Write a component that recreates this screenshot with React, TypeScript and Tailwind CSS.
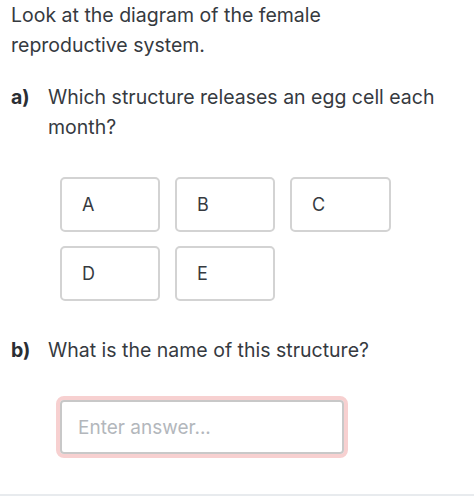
const options = ["A", "B", "C", "D", "E"];

const App = () => {
  return (
    <div
      className="w-[474px] h-[503px] bg-white text-[#363a3f] overflow-hidden flex flex-col"
      style={{ fontFamily: "Inter, 'Open Sans', sans-serif" }}
    >
      <div className="px-[11px] flex flex-col">
        <p className="text-[19.5px] leading-[30px]">
          Look at the diagram of the female
          <br />
          reproductive system.
        </p>

        <div className="flex mt-[22px]">
          <span className="w-[37px] shrink-0 text-[19.5px] leading-[30px] font-bold text-[#2a2e33]">
            a)
          </span>
          <p className="text-[19.5px] leading-[30px]">
            Which structure releases an egg cell each
            <br />
            month?
          </p>
        </div>

        <div className="grid grid-cols-[100px_100px_101px] gap-x-[15px] gap-y-[14px] ml-[49px] mt-[35px]">
          {options.map((o) => (
            <button
              key={o}
              className="h-[55px] border-2 border-[#d3d3d3] rounded-[5px] bg-white text-left pl-[20px] text-[18px] text-[#363a3f]"
            >
              {o}
            </button>
          ))}
        </div>

        <div className="flex mt-[34px]">
          <span className="w-[37px] shrink-0 text-[19.5px] leading-[30px] font-bold text-[#2a2e33]">
            b)
          </span>
          <p className="text-[19.5px] leading-[30px]">What is the name of this structure?</p>
        </div>

        <div className="ml-[45px] mt-[31px] w-[292px] rounded-[8px] border-4 border-[#f7d0d0] p-0">
          <input
            placeholder="Enter answer..."
            className="w-full h-[54px] border-2 border-[#c8c8c8] rounded-[4px] px-[16px] text-[19px] placeholder:text-[#b3b7bc] outline-none"
          />
        </div>
      </div>

      <div className="mt-auto mb-[7px] h-[2px] bg-[#e8ebee]" />
    </div>
  );
};

export default App;
